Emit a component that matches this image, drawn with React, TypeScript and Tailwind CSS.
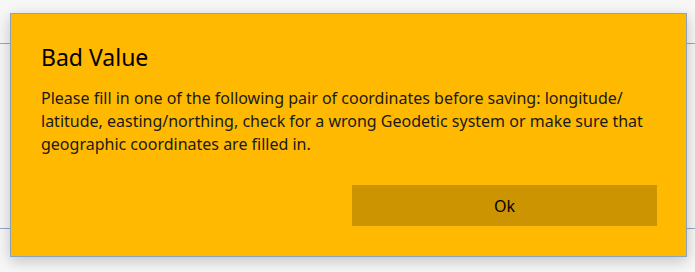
import React from "react";

export default function App() {
  return (
    <div
      className="relative h-[272px] w-[695px] overflow-hidden bg-[#f7f7f7]"
      style={{ fontFamily: '"Noto Sans", "Open Sans", sans-serif' }}
    >
      {/* Page behind the modal */}
      <div className="flex h-full flex-col pt-[43px]">
        <div className="h-px w-full bg-[#92a9c3]" />
        <div className="flex-1" />
        <div className="mb-[43px] h-px w-full bg-[#92a9c3]" />
      </div>

      {/* Modal */}
      <div className="absolute left-[10px] top-[13px] flex h-[244px] w-[677px] flex-col border border-[#8ba3bd] bg-[#ffb900] pl-[30px] pr-[29px] shadow-[0_4px_14px_rgba(0,0,0,0.22)]">
        <h2 className="mt-[27px] text-[23px] leading-[32px] text-black">Bad Value</h2>
        <p className="mt-[14px] text-[16px] leading-[23px] text-[#1a1a1a] whitespace-nowrap">
          Please fill in one of the following pair of coordinates before saving: longitude/
          <br />
          latitude, easting/northing, check for a wrong Geodetic system or make sure that
          <br />
          geographic coordinates are filled in.
        </p>
        <div className="mt-auto mb-[30px] flex justify-end">
          <button className="h-[41px] w-[305px] bg-[#cc9400] text-[16px] text-black">Ok</button>
        </div>
      </div>
    </div>
  );
}
